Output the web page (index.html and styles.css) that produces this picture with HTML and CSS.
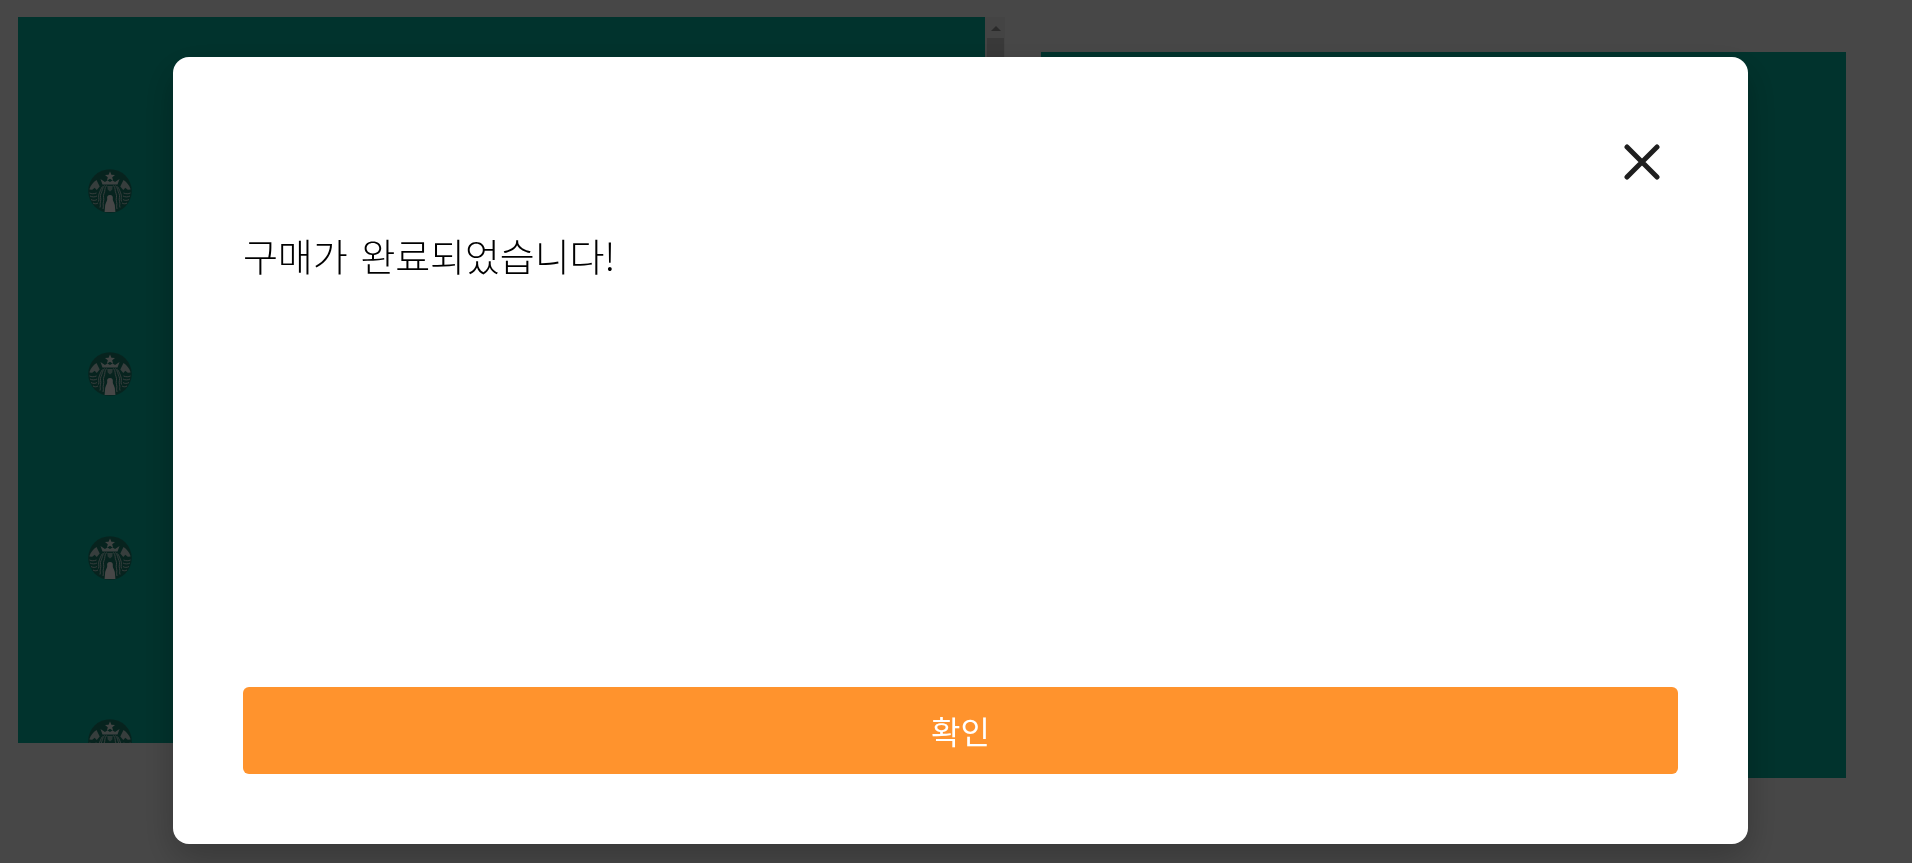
FILE: index.html
```html
<!DOCTYPE html>
<html lang="ko">
<head>
<meta charset="utf-8">
<title>구매 완료</title>
<link rel="stylesheet" href="styles.css">
</head>
<body>
<svg class="defs" width="0" height="0" aria-hidden="true">
  <symbol id="siren" viewBox="0 0 44 44">
    <circle cx="22" cy="22" r="21.800" fill="#1a7f6e"/>
    <g fill="#fff">
      <path d="M22 2.500l1.400 3.300 3.600.2-2.800 2.300.9 3.400-3.100-1.900-3.100 1.900.9-3.400L17 6l3.600-.2z" opacity=".9"/>
      <path d="M12.500 10l4.400 3 2.500-1.600 2.600 1.600 2.600-1.600 2.500 1.600 4.400-3-2 5.500H14.500z" opacity=".85"/>
      <path d="M1.500 20c1.200-3.600 3.700-7 7-9l3.200 6.500-3 3.500-2-2.200-2.500 2-2.700-.2z" opacity=".75"/>
      <path d="M42.500 20c-1.200-3.600-3.700-7-7-9l-3.200 6.500 3 3.500 2-2.200 2.500 2 2.700-.2z" opacity=".75"/>
      <path d="M22 26c2.200 0 3.200 1.800 2.800 3.600-.4 1.900 1.200 3.600 2 6.400l.6 7h-10.800l.6-7c.8-2.800 2.400-4.500 2-6.400-.4-1.800.6-3.600 2.800-3.600z"/>
      <path d="M19.300 17h5.400l-.4 3.400-2.300 2-2.300-2z" opacity=".55"/>
    </g>
    <g fill="none" stroke="#fff" stroke-width=".9" opacity=".8">
      <path d="M18.500 16.500c-2.500 3-1 5-2.500 8s.5 5-.5 8 .5 4-.5 7.500"/>
      <path d="M16.500 16.500c-2.500 3-2 5-3.500 8s.5 5-.5 8 .5 3-.5 6"/>
      <path d="M14.500 17.500c-2 3-2.500 5-3.500 7.500s.5 5-.5 7.500"/>
      <path d="M25.500 16.500c2.500 3 1 5 2.500 8s-.5 5 .5 8-.5 4 .5 7.500"/>
      <path d="M27.500 16.500c2.500 3 2 5 3.500 8s-.5 5 .5 8-.5 3 .5 6"/>
      <path d="M29.500 17.500c2 3 2.500 5 3.500 7.500s-.5 5 .5 7.500"/>
      <path d="M1.500 24c2 1 4.500 1 7 0M2 27c2 1.200 5 1.200 7 0M3 30.500c2 1.200 4.500 1.200 6 0M5 34c1.500 1 3.500 1 5 0"/>
      <path d="M42.500 24c-2 1-4.500 1-7 0M42 27c-2 1.200-5 1.200-7 0M41 30.500c-2 1.200-4.500 1.200-6 0M39 34c-1.500 1-3.500 1-5 0"/>
    </g>
  </symbol>
</svg>

<div class="page">
  <section class="panel panel-left">
    <svg class="logo"><use href="#siren"/></svg>
    <svg class="logo"><use href="#siren"/></svg>
    <svg class="logo"><use href="#siren"/></svg>
    <svg class="logo"><use href="#siren"/></svg>
  </section>
  <div class="scrollbar">
    <div class="scroll-arrow"></div>
    <div class="scroll-thumb"></div>
  </div>
  <section class="panel panel-right"></section>
</div>

<div class="overlay">
  <div class="modal" role="dialog" aria-modal="true">
    <div class="modal-head">
      <button class="close" type="button" aria-label="닫기">
        <svg class="close-icon" viewBox="0 0 36 36"><path d="M3 3l30 30M33 3L3 33"/></svg>
      </button>
    </div>
    <p class="message">구매가 완료되었습니다!</p>
    <button class="confirm" type="button">확인</button>
  </div>
</div>
</body>
</html>
```
FILE: styles.css
```css
* { box-sizing: border-box; }
html, body { margin: 0; height: 100%; }
body {
  position: relative;
  overflow: hidden;
  background: #fff;
  font-family: "Noto Sans CJK KR", "Noto Sans", sans-serif;
}
.defs { position: absolute; }
.page {
  display: flex;
  align-items: flex-start;
  height: 100%;
  padding: 17px 0 0 18px;
}
.panel {
  height: 726px;
  background: #04b6a0;
}
.panel-left {
  width: 967px;
  overflow: hidden;
  display: flex;
  flex-direction: column;
  gap: 139.300px;
  padding: 152px 0 0 70px;
}
.logo {
  display: block;
  flex: none;
  width: 44px;
  height: 44px;
}
.scrollbar {
  width: 20px;
  height: 726px;
  background: #f3f3f3;
  padding: 9px 1px 0 2px;
}
.scroll-arrow {
  width: 0;
  height: 0;
  margin: 0 auto 7px;
  border-left: 5px solid transparent;
  border-right: 5px solid transparent;
  border-bottom: 5px solid #9a9a9a;
}
.scroll-thumb {
  height: 300px;
  background: #cccccc;
}
.panel-right {
  width: 805px;
  margin: 35px 0 0 36px;
}
.overlay {
  position: fixed;
  inset: 0;
  display: flex;
  padding: 57px 164px 19px 173px;
  background: rgba(0, 0, 0, 0.72);
}
.modal {
  flex: 1;
  display: flex;
  flex-direction: column;
  padding: 70px;
  background: #fff;
  border-radius: 16px;
  box-shadow: 0 14px 36px rgba(0, 0, 0, 0.24);
}
.modal-head {
  display: flex;
  justify-content: flex-end;
  padding: 17px 18px 0 0;
}
.close {
  display: block;
  width: 36px;
  height: 36px;
  padding: 0;
  border: 0;
  background: none;
}
.close-icon {
  display: block;
  width: 36px;
  height: 36px;
  fill: none;
  stroke: #1e1e1e;
  stroke-width: 5;
  stroke-linecap: round;
}
.message {
  margin: 48px 0 0;
  font-size: 38px;
  font-weight: 300;
  line-height: 54px;
  letter-spacing: -0.12px;
  word-spacing: 2.400px;
  color: #000;
}
.confirm {
  margin-top: auto;
  width: 100%;
  height: 87px;
  padding: 0 0 2px;
  border: 0;
  border-radius: 6px;
  background: #ff932d;
  color: #fff;
  font-family: inherit;
  font-size: 32px;
  font-weight: 400;
}
```
